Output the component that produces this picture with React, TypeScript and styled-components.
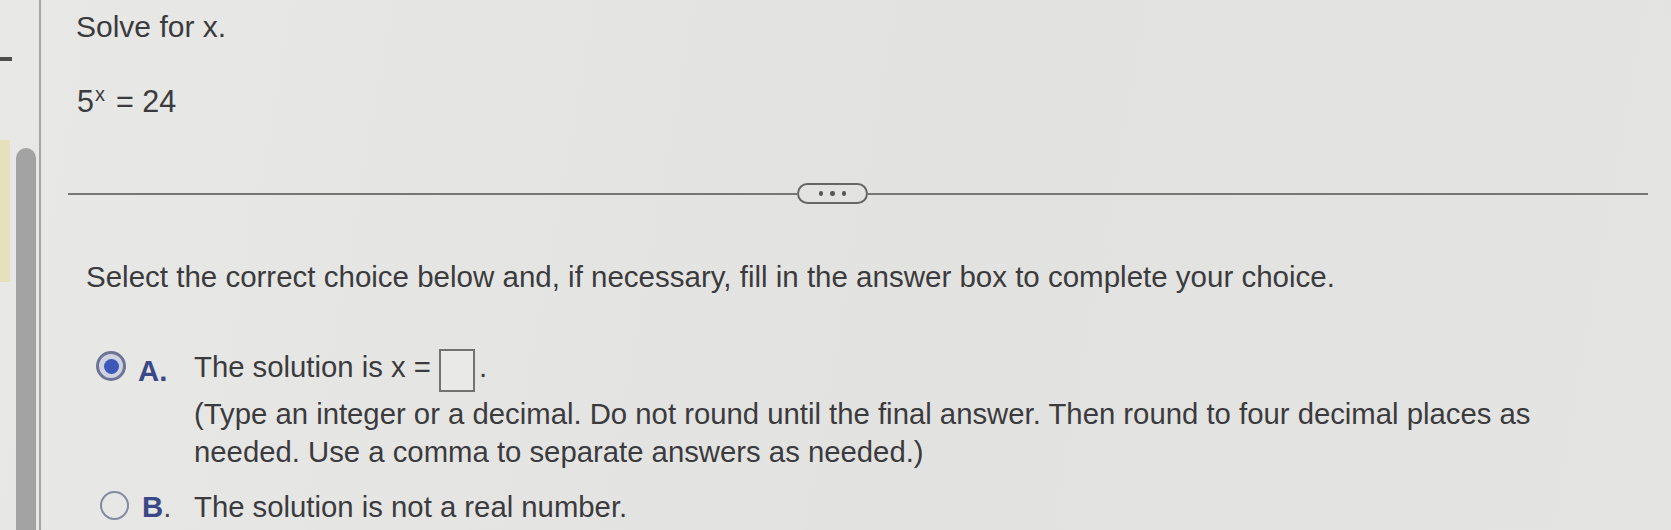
import React from "react";
import styled, { createGlobalStyle } from "styled-components";

const Global = createGlobalStyle`
  html, body { margin: 0; padding: 0; }
  body {
    width: 1671px;
    height: 530px;
    overflow: hidden;
    background: #e3e3e1;
    font-family: "Liberation Sans", Arial, sans-serif;
    color: #3b3b3e;
  }
`;

const Page = styled.div`
  display: flex;
  width: 1671px;
  height: 530px;
  background: linear-gradient(100deg, #e8e8e6 0%, #e2e2e0 55%, #e4e4e2 100%);
`;

const Gutter = styled.div`
  position: relative;
  width: 41px;
  flex: none;
  border-right: 2px solid #a4a4a4;
  box-sizing: border-box;
`;

const Dash = styled.div`
  position: absolute;
  left: 0;
  top: 57px;
  width: 12px;
  height: 4px;
  background: #4e4e4e;
`;

const Highlight = styled.div`
  position: absolute;
  left: 0;
  top: 140px;
  width: 10px;
  height: 142px;
  background: #e7e0bc;
`;

const Scrollbar = styled.div`
  position: absolute;
  left: 16px;
  top: 148px;
  width: 20px;
  height: 400px;
  border-radius: 10px 10px 0 0;
  background: #a3a3a3;
`;

const Main = styled.div`
  flex: 1;
  display: flex;
  flex-direction: column;
  padding: 9px 23px 0 35px;
  font-size: 29.3px;
`;

const Title = styled.div`
  line-height: 36px;
  font-size: 30px;
`;

const Equation = styled.div`
  margin-top: 38px;
  margin-left: 1px;
  line-height: 37px;
  font-size: 30.5px;
`;

const Sup = styled.span`
  font-size: 20px;
  position: relative;
  top: -11px;
  margin: 0 11px 0 1px;
`;

const DividerRow = styled.div`
  display: grid;
  grid-template-columns: 729px 71px 1fr;
  align-items: center;
  margin-top: 59px;
  margin-left: -8px;
`;

const Rule = styled.div`
  height: 2px;
  background: #767676;
`;

const Pill = styled.div`
  box-sizing: border-box;
  height: 21px;
  border: 2.5px solid #666;
  border-radius: 11px;
  display: flex;
  align-items: center;
  justify-content: center;
  gap: 7px;
`;

const Dot = styled.span`
  width: 4.5px;
  height: 4.5px;
  border-radius: 50%;
  background: #575757;
`;

const Prompt = styled.div`
  margin-top: 55px;
  margin-left: 10px;
  line-height: 36px;
  font-size: 29.5px;
`;

const Choice = styled.div<{ $top: number }>`
  display: grid;
  grid-template-columns: 45px 56px 1fr;
  align-items: start;
  margin-top: ${(p) => p.$top}px;
  margin-left: 17px;
`;

const RadioOn = styled.div`
  box-sizing: border-box;
  width: 30px;
  height: 30px;
  margin: 2px 0 0 3px;
  border-radius: 50%;
  border: 3px solid #6e7494;
  background: #cfd2e2;
  display: flex;
  align-items: center;
  justify-content: center;
`;

const RadioDot = styled.span`
  width: 15px;
  height: 15px;
  border-radius: 50%;
  background: #3d58b8;
`;

const RadioOff = styled.div`
  box-sizing: border-box;
  width: 29px;
  height: 29px;
  margin: 2px 0 0 7px;
  border-radius: 50%;
  border: 2.5px solid #858aa3;
`;

const Letter = styled.div<{ $shift?: number; $top?: number }>`
  font-weight: bold;
  color: #3b4888;
  line-height: 36px;
  margin-left: ${(p) => p.$shift ?? 0}px;
  margin-top: ${(p) => p.$top ?? 0}px;
`;

const Dot2 = styled.span`
  font-weight: normal;
  color: #4a4a55;
`;

const Body = styled.div`
  line-height: 36px;
`;

const FirstLine = styled.div`
  line-height: 36px;
`;

const AnswerBox = styled.span`
  display: inline-block;
  box-sizing: border-box;
  width: 36px;
  height: 43px;
  vertical-align: -15px;
  margin: 0 4px 0 8px;
  border: 2px solid #727272;
  background: #e9e9e7;
`;

const Note = styled.div`
  margin-top: 3px;
  line-height: 38px;
`;

export default function App() {
  return (
    <>
      <Global />
      <Page>
        <Gutter>
          <Dash />
          <Highlight />
          <Scrollbar />
        </Gutter>
        <Main>
          <Title>Solve for x.</Title>
          <Equation>
            5<Sup>x</Sup>= 24
          </Equation>
          <DividerRow>
            <Rule />
            <Pill>
              <Dot />
              <Dot />
              <Dot />
            </Pill>
            <Rule />
          </DividerRow>
          <Prompt>
            Select the correct choice below and, if necessary, fill in the answer box to complete your choice.
          </Prompt>
          <Choice $top={54}>
            <RadioOn>
              <RadioDot />
            </RadioOn>
            <Letter $top={4}>A.</Letter>
            <Body>
              <FirstLine>
                The solution is x =<AnswerBox />.
              </FirstLine>
              <Note>
                (Type an integer or a decimal. Do not round until the final answer. Then round to four decimal places as
                <br />
                needed. Use a comma to separate answers as needed.)
              </Note>
            </Body>
          </Choice>
          <Choice $top={18}>
            <RadioOff />
            <Letter $shift={4}>
              B<Dot2>.</Dot2>
            </Letter>
            <Body>The solution is not a real number.</Body>
          </Choice>
        </Main>
      </Page>
    </>
  );
}
